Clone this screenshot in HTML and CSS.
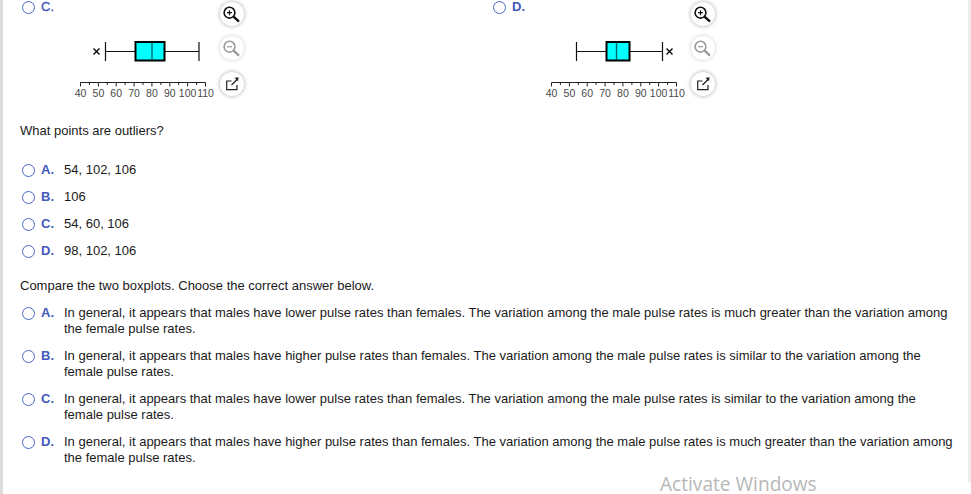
FILE: index.html
```html
<!DOCTYPE html>
<html lang="en">
<head>
<meta charset="utf-8">
<title>Boxplots</title>
<link rel="stylesheet" href="styles.css">
</head>
<body>
<main class="page">
  <section class="plots">
    <div class="plot-col">
      <div class="choice choice-head"><span class="radio"></span><span class="letter letter-light">C.</span></div>
      <div class="plot-row">
        <svg class="plot" width="180" height="100" viewBox="0 0 180 100">
          <g class="ink">
            <path d="M24.500 48.500l6 6M30.500 48.500l-6 6" class="cross"/>
            <path d="M36.500 42v19M36.500 51.500H66M96 51.500H130M130 42v19" class="whisk"/>
            <rect x="66.500" y="42" width="29" height="18.500" class="box"/>
            <path d="M83 43v17" class="median"/>
            <path class="axis" d="M11.500 86.500v-4h125v4M20.400 82.500v2.500M29.400 82.500v4M38.300 82.500v2.500M47.200 82.500v4M56.100 82.500v2.500M65.100 82.500v4M74 82.500v2.500M82.900 82.500v4M91.900 82.500v2.500M100.800 82.500v4M109.700 82.500v2.500M118.600 82.500v4M127.600 82.500v2.500"/>
          </g>
          <g class="ticks">
            <text x="11.500" y="97">40</text><text x="29.400" y="97">50</text><text x="47.200" y="97">60</text><text x="65.100" y="97">70</text><text x="82.900" y="97">80</text><text x="100.800" y="97">90</text><text x="118.600" y="97">100</text><text x="136.500" y="97">110</text>
          </g>
        </svg>
        <div class="tools">
          <button class="tool" type="button"><svg width="20" height="20" viewBox="0 0 20 20"><circle cx="7.500" cy="8.700" r="5.400" class="lens"/><path d="M11.500 12.700l5.500 5" class="handle"/><path d="M5 8.700h5M7.500 6.200v5" class="sign"/></svg></button>
          <button class="tool tool-off" type="button"><svg width="20" height="20" viewBox="0 0 20 20"><circle cx="7.500" cy="8.700" r="5.400" class="lens"/><path d="M11.500 12.700l5.500 5" class="handle"/><path d="M5 8.700h5" class="sign"/></svg></button>
          <button class="tool tool-link" type="button"><svg width="20" height="20" viewBox="0 0 20 20"><path d="M9.500 7H4.700v8.700H15V11" class="frame"/><path d="M9.500 11L15 5.500" class="frame"/><path d="M12.500 3.800l4-.5-.5 4z" class="tip"/></svg></button>
        </div>
      </div>
    </div>
    <div class="plot-col">
      <div class="choice choice-head"><span class="radio"></span><span class="letter">D.</span></div>
      <div class="plot-row">
        <svg class="plot" width="180" height="100" viewBox="0 0 180 100">
          <g class="ink">
            <path d="M126.500 48.500l6 6M132.500 48.500l-6 6" class="cross"/>
            <path d="M36.500 42v19M36.500 51.500H66M89 51.500H122.500M122.500 42v19" class="whisk"/>
            <rect x="66.500" y="42" width="23" height="18.500" class="box"/>
            <path d="M76.500 43v17" class="median"/>
            <path class="axis" d="M11.500 86.500v-4h125v4M20.400 82.500v2.500M29.400 82.500v4M38.300 82.500v2.500M47.200 82.500v4M56.100 82.500v2.500M65.100 82.500v4M74 82.500v2.500M82.900 82.500v4M91.900 82.500v2.500M100.800 82.500v4M109.700 82.500v2.500M118.600 82.500v4M127.600 82.500v2.500"/>
          </g>
          <g class="ticks">
            <text x="11.500" y="97">40</text><text x="29.400" y="97">50</text><text x="47.200" y="97">60</text><text x="65.100" y="97">70</text><text x="82.900" y="97">80</text><text x="100.800" y="97">90</text><text x="118.600" y="97">100</text><text x="136.500" y="97">110</text>
          </g>
        </svg>
        <div class="tools">
          <button class="tool" type="button"><svg width="20" height="20" viewBox="0 0 20 20"><circle cx="7.500" cy="8.700" r="5.400" class="lens"/><path d="M11.500 12.700l5.500 5" class="handle"/><path d="M5 8.700h5M7.500 6.200v5" class="sign"/></svg></button>
          <button class="tool tool-off" type="button"><svg width="20" height="20" viewBox="0 0 20 20"><circle cx="7.500" cy="8.700" r="5.400" class="lens"/><path d="M11.500 12.700l5.500 5" class="handle"/><path d="M5 8.700h5" class="sign"/></svg></button>
          <button class="tool tool-link" type="button"><svg width="20" height="20" viewBox="0 0 20 20"><path d="M9.500 7H4.700v8.700H15V11" class="frame"/><path d="M9.500 11L15 5.500" class="frame"/><path d="M12.500 3.800l4-.5-.5 4z" class="tip"/></svg></button>
        </div>
      </div>
    </div>
  </section>

  <p class="question">What points are outliers?</p>
  <ul class="short-list">
    <li class="choice"><span class="radio"></span><span class="letter">A.</span><span class="answer">54, 102, 106</span></li>
    <li class="choice"><span class="radio"></span><span class="letter">B.</span><span class="answer">106</span></li>
    <li class="choice"><span class="radio"></span><span class="letter">C.</span><span class="answer">54, 60, 106</span></li>
    <li class="choice"><span class="radio"></span><span class="letter">D.</span><span class="answer">98, 102, 106</span></li>
  </ul>

  <p class="question q-compare">Compare the two boxplots. Choose the correct answer below.</p>
  <ul class="long-list">
    <li class="choice"><span class="radio"></span><span class="letter">A.</span><span class="answer">In general, it appears that males have lower pulse rates than females. The variation among the male pulse rates is much greater than the variation among the female pulse rates.</span></li>
    <li class="choice"><span class="radio"></span><span class="letter">B.</span><span class="answer">In general, it appears that males have higher pulse rates than females. The variation among the male pulse rates is similar to the variation among the female pulse rates.</span></li>
    <li class="choice"><span class="radio"></span><span class="letter">C.</span><span class="answer">In general, it appears that males have lower pulse rates than females. The variation among the male pulse rates is similar to the variation among the female pulse rates.</span></li>
    <li class="choice"><span class="radio"></span><span class="letter">D.</span><span class="answer">In general, it appears that males have higher pulse rates than females. The variation among the male pulse rates is much greater than the variation among the female pulse rates.</span></li>
  </ul>
</main>
<div class="edge-strip"></div>
<div class="watermark">Activate Windows</div>
</body>
</html>
```
FILE: styles.css
```css
* { box-sizing: border-box; }
html, body { margin: 0; height: 494px; overflow: hidden; background: #fff; }
body { position: relative; font-family: "Liberation Sans", Arial, sans-serif; font-size: 13px; line-height: 16px; color: #1a1a1a; }
.page { width: 971px; height: 494px; padding-left: 3px; border-left: 3px solid #dcdcdc; overflow: hidden; }
.plots { display: grid; grid-template-columns: 471px 471px; padding-left: 16px; height: 124px; margin-top: -1px; }
.choice { display: flex; align-items: flex-start; list-style: none; }
.choice-head { height: 16px; }
.radio { flex: none; width: 13px; height: 13px; margin: 2px 6px 0 0; border: 1.5px solid #4a68c9; border-radius: 50%; background: #fff; }
.letter { flex: none; width: 23px; color: #4259bd; font-weight: 700; }
.letter-light { font-weight: 400; -webkit-text-stroke: 0.3px #4259bd; }
.plot-row { display: flex; margin-top: -15px; padding-left: 47px; }
.plot { display: block; flex: none; }
.ink { fill: none; stroke: #000; stroke-width: 1; }
.cross { stroke-width: 1.300; }
.whisk { stroke: #111; stroke-width: 1.200; }
.box { fill: #00ffff; stroke: #000; stroke-width: 2; }
.median { stroke: #00666c; stroke-width: 1.400; }
.axis { stroke: #222; }
.ticks text { font-family: "Liberation Sans", Arial, sans-serif; font-size: 10.500px; fill: #4a4a4a; stroke: none; text-anchor: middle; }
.tools { display: flex; flex-direction: column; padding-top: 2px; margin-left: -29px; }
.tool { display: flex; align-items: center; justify-content: center; flex: none; width: 24px; height: 24px; margin-bottom: 10px; padding: 0; border: 0; border-radius: 50%; background: #fff; box-shadow: 0 0 4px rgba(0,0,0,.35); }
.tool-off { margin-bottom: 12px; box-shadow: 0 0 4px rgba(0,0,0,.2); }
.lens { fill: none; stroke: #111; stroke-width: 1.600; }
.handle { stroke: #111; stroke-width: 2.400; fill: none; }
.sign { stroke: #111; stroke-width: 1.200; fill: none; }
.tool-off .lens, .tool-off .handle, .tool-off .sign { stroke: #9a9a9a; }
.frame { fill: none; stroke: #222; stroke-width: 1.200; }
.tip { fill: #222; }
.question { margin: 0; padding-left: 14px; }
.short-list, .long-list { display: flex; flex-direction: column; gap: 11px; margin: 0; padding: 0 0 0 16px; }
.short-list { margin-top: 23px; }
.q-compare { margin-top: 19px; }
.long-list { margin-top: 11px; }
.long-list .answer { width: 891px; }
.edge-strip { position: absolute; top: 0; right: 0; width: 3px; height: 482px; background: #ededed; }
.watermark { position: absolute; left: 660px; top: 475px; font-family: "Open Sans", sans-serif; font-size: 19.100px; line-height: 19px; color: #b7b7b7; }
```
